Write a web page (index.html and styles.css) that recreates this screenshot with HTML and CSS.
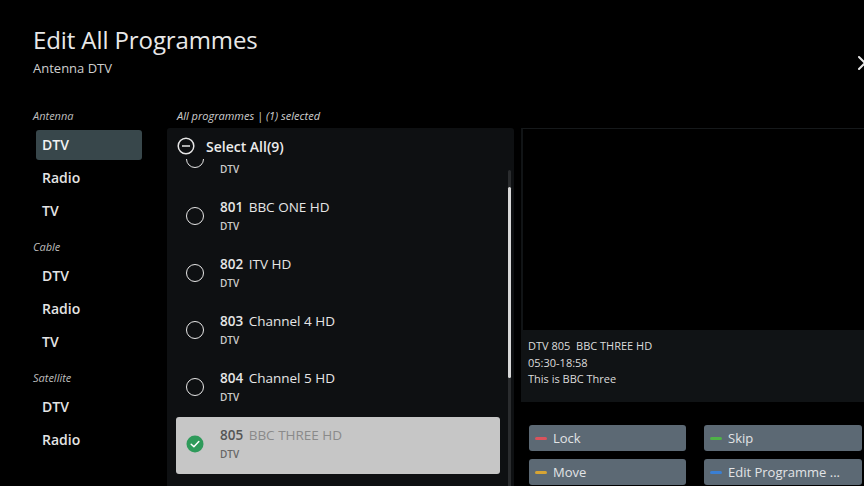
FILE: index.html
```html
<!DOCTYPE html>
<html lang="en">
<head>
<meta charset="utf-8">
<title>Edit All Programmes</title>
<link rel="stylesheet" href="styles.css">
</head>
<body>
<div class="screen">
  <header class="header">
    <div class="titles">
      <h1 class="title">Edit All Programmes</h1>
      <div class="subtitle">Antenna DTV</div>
    </div>
    <svg class="close" viewBox="0 0 16 16" width="16" height="16"><path d="M2 2 L14 14 M14 2 L2 14" stroke="#e8e8e8" stroke-width="2" fill="none" stroke-linecap="round"/></svg>
  </header>

  <main class="main">
    <nav class="sidebar">
      <div class="group-label">Antenna</div>
      <div class="nav-item active">DTV</div>
      <div class="nav-item">Radio</div>
      <div class="nav-item">TV</div>
      <div class="group-label spaced">Cable</div>
      <div class="nav-item">DTV</div>
      <div class="nav-item">Radio</div>
      <div class="nav-item">TV</div>
      <div class="group-label spaced">Satellite</div>
      <div class="nav-item">DTV</div>
      <div class="nav-item">Radio</div>
    </nav>

    <section class="list-col">
      <div class="list-header">All programmes | (1) selected</div>
      <div class="list-panel">
        <div class="select-all">
          <svg class="minus-icon" viewBox="0 0 18 18" width="18" height="18"><circle cx="9" cy="9" r="7.8" stroke="#e6e6e6" stroke-width="1.5" fill="none"/><path d="M5 9 H13" stroke="#e6e6e6" stroke-width="1.5"/></svg>
          <span>Select All(9)</span>
        </div>
        <div class="scroll">
          <div class="items">
            <div class="item"><span class="radio"></span><div class="text"><div class="name"></div><div class="type">DTV</div></div></div>
            <div class="item"><span class="radio"></span><div class="text"><div class="name"><b>801</b> BBC ONE HD</div><div class="type">DTV</div></div></div>
            <div class="item"><span class="radio"></span><div class="text"><div class="name"><b>802</b> ITV HD</div><div class="type">DTV</div></div></div>
            <div class="item"><span class="radio"></span><div class="text"><div class="name"><b>803</b> Channel 4 HD</div><div class="type">DTV</div></div></div>
            <div class="item"><span class="radio"></span><div class="text"><div class="name"><b>804</b> Channel 5 HD</div><div class="type">DTV</div></div></div>
            <div class="item selected">
              <svg class="check" viewBox="0 0 18 18" width="18" height="18"><circle cx="9" cy="9" r="8.5" fill="#2e9a5a"/><path d="M5.2 9.3 L7.9 11.8 L12.8 6.6" stroke="#ffffff" stroke-width="1.5" fill="none" stroke-linecap="round" stroke-linejoin="round"/></svg>
              <div class="text"><div class="name"><b>805</b> BBC THREE HD</div><div class="type">DTV</div></div>
            </div>
          </div>
        </div>
        <div class="scroll-track"></div>
        <div class="scroll-thumb"></div>
      </div>
    </section>

    <section class="detail-col">
      <div class="preview-panel">
        <div class="video"></div>
        <div class="info">
          <div>DTV 805&nbsp; BBC THREE HD</div>
          <div>05:30-18:58</div>
          <div>This is BBC Three</div>
        </div>
      </div>
      <div class="buttons">
        <div class="btn"><span class="key red"></span>Lock</div>
        <div class="btn"><span class="key green"></span>Skip</div>
        <div class="btn"><span class="key yellow"></span>Move</div>
        <div class="btn"><span class="key blue"></span>Edit Programme ...</div>
      </div>
    </section>
  </main>
</div>
</body>
</html>
```

FILE: styles.css
```css
* { box-sizing: border-box; }

html, body {
  margin: 0;
  padding: 0;
  background: #000;
  overflow: hidden;
}

body {
  width: 864px;
  height: 486px;
  font-family: "Open Sans", "Noto Sans", "Liberation Sans", sans-serif;
  color: #e6e6e6;
}

.screen {
  width: 864px;
  height: 486px;
  overflow: hidden;
}

/* Header */
.header {
  display: flex;
  justify-content: space-between;
  align-items: flex-start;
  height: 106px;
  padding: 26px 0 0 33px;
}

.title {
  margin: 0;
  font-size: 24px;
  line-height: 28px;
  font-weight: 400;
  color: #e8e8e8;
  letter-spacing: -0.1px;
}

.subtitle {
  margin-top: 5px;
  font-size: 13px;
  line-height: 18px;
  color: #cfcfcf;
}

.close {
  margin-top: 29px;
  margin-right: -9px;
  flex: none;
}

/* Main grid */
.main {
  display: grid;
  grid-template-columns: 167px 347px 1fr;
  height: 380px;
}

/* Sidebar */
.sidebar {
  padding-left: 33px;
}

.group-label {
  font-size: 11px;
  line-height: 20px;
  font-style: italic;
  color: #bdbdbd;
  margin-bottom: 4px;
}

.group-label.spaced {
  margin-top: 11px;
}

.nav-item {
  margin-left: 3px;
  width: 106px;
  height: 30px;
  line-height: 30px;
  padding-left: 6px;
  font-size: 14px;
  font-weight: 600;
  color: #e4e4e4;
  border-radius: 3px;
  margin-bottom: 3px;
}

.nav-item.active {
  background: #38474b;
  color: #f2f2f2;
}

/* List column */
.list-header {
  height: 20px;
  line-height: 20px;
  padding-left: 10px;
  font-size: 11px;
  font-style: italic;
  color: #cfcfcf;
  margin-bottom: 2px;
}

.list-panel {
  position: relative;
  height: 360px;
  background: #0e1012;
  border-radius: 3px 3px 0 0;
  overflow: hidden;
  display: flex;
  flex-direction: column;
}

.select-all {
  display: flex;
  align-items: center;
  gap: 11px;
  padding: 9px 0 4px 10px;
  height: 31px;
  font-size: 14px;
  font-weight: 600;
  color: #ececec;
  flex: none;
}

.minus-icon { flex: none; }

.scroll {
  flex: 1;
  overflow: hidden;
}

.items {
  margin-top: -27px;
}

.item {
  display: flex;
  align-items: flex-start;
  margin-left: 9px;
  width: 324px;
  height: 57px;
  padding-left: 10px;
  border-radius: 3px;
}

.radio {
  flex: none;
  width: 18px;
  height: 18px;
  margin-top: 18px;
  border: 1.6px solid #e8e8e8;
  border-radius: 50%;
}

.check {
  flex: none;
  margin-top: 18px;
}

.text {
  margin-left: 16px;
  padding-top: 9px;
}

.name {
  height: 18px;
  font-size: 13.5px;
  line-height: 18px;
  color: #e6e6e6;
}

.name b {
  font-weight: 600;
  margin-right: 2px;
}

.type {
  margin-top: 3px;
  font-size: 10px;
  line-height: 14px;
  font-weight: 600;
  color: #cccccc;
}

.item.selected {
  background: #c6c6c6;
}

.item.selected .name { color: #8a8a8a; }
.item.selected .name b { color: #555; }
.item.selected .type { color: #666; }

.scroll-track {
  position: absolute;
  left: 341px;
  top: 42px;
  bottom: 0;
  width: 3px;
  background: #2a2c2e;
  border-radius: 2px;
}

.scroll-thumb {
  position: absolute;
  left: 341px;
  top: 59px;
  height: 191px;
  width: 3px;
  background: #d8d8d8;
  border-radius: 2px;
}

/* Detail column */
.detail-col {
  margin-left: 7px;
  padding-top: 22px;
}

.preview-panel {
  width: 345px;
}

.video {
  height: 202px;
  background: #000;
  border-top: 1px solid #16191b;
  border-left: 2px solid #111416;
}

.info {
  height: 72px;
  background: #101315;
  padding: 8px 7px;
  font-size: 11px;
  line-height: 16.5px;
  color: #dcdcdc;
}

.buttons {
  margin-top: 23px;
  padding-left: 8px;
  display: grid;
  grid-template-columns: 157px 158px;
  column-gap: 18px;
  row-gap: 8px;
}

.btn {
  display: flex;
  align-items: center;
  height: 26px;
  padding-left: 6px;
  background: #5c6974;
  border-radius: 3px;
  font-size: 13px;
  color: #e2e4e6;
  white-space: nowrap;
}

.key {
  width: 12px;
  height: 3px;
  border-radius: 2px;
  margin-right: 6px;
  flex: none;
}

.key.red { background: #d9535c; }
.key.green { background: #4fb248; }
.key.yellow { background: #d6a434; }
.key.blue { background: #3a7fd4; }
```
